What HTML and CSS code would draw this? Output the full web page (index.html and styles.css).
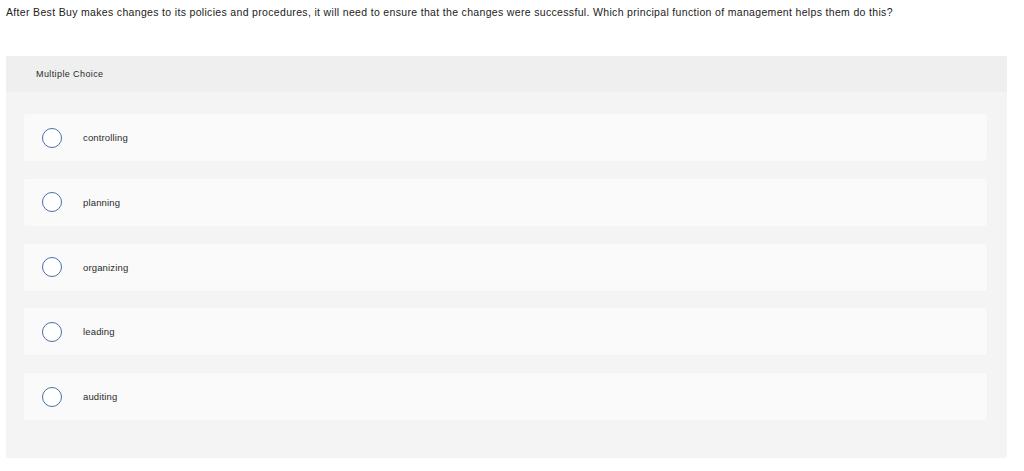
FILE: index.html
```html
<!DOCTYPE html>
<html lang="en">
<head>
<meta charset="utf-8">
<title>Multiple Choice</title>
<link rel="stylesheet" href="styles.css">
</head>
<body>
<main class="page">
  <p class="question">After Best Buy makes changes to its policies and procedures, it will need to ensure that the changes were successful. Which principal function of management helps them do this?</p>
  <section class="panel">
    <header class="panel-head">Multiple Choice</header>
    <div class="options">
      <label class="option"><span class="radio"></span><span class="label">controlling</span></label>
      <label class="option"><span class="radio"></span><span class="label">planning</span></label>
      <label class="option"><span class="radio"></span><span class="label">organizing</span></label>
      <label class="option"><span class="radio"></span><span class="label">leading</span></label>
      <label class="option"><span class="radio"></span><span class="label">auditing</span></label>
    </div>
  </section>
</main>
</body>
</html>
```

FILE: styles.css
```css
html, body {
  margin: 0;
  padding: 0;
  background: #ffffff;
}
body {
  font-family: "Liberation Sans", Arial, sans-serif;
  color: #222222;
}
.page {
  padding: 0 17px 0 6px;
}
.question {
  margin: 0;
  padding-top: 6px;
  font-size: 10.5px;
  letter-spacing: 0.33px;
  line-height: 12px;
  height: 50px;
  white-space: nowrap;
}
.panel {
  background: #f4f4f4;
  border-radius: 2px;
  padding-bottom: 38px;
}
.panel-head {
  background: #efefef;
  height: 36px;
  display: flex;
  align-items: center;
  padding-left: 30px;
  font-size: 9px;
  letter-spacing: 0.4px;
  color: #2a2a2a;
  border-radius: 2px 2px 0 0;
}
.options {
  display: flex;
  flex-direction: column;
  gap: 17.8px;
  padding: 22px 20px 0 18px;
}
.option {
  display: flex;
  align-items: center;
  height: 47px;
  background: #fafafa;
  border-radius: 3px;
  padding-left: 18px;
  box-sizing: border-box;
}
.radio {
  width: 20px;
  height: 20px;
  box-sizing: border-box;
  border: 1px solid #4a70a8;
  border-radius: 50%;
  background: #ffffff;
  flex: none;
}
.label {
  margin-left: 21px;
  font-size: 9.5px;
  letter-spacing: 0.15px;
  color: #2a2a2a;
}
```
